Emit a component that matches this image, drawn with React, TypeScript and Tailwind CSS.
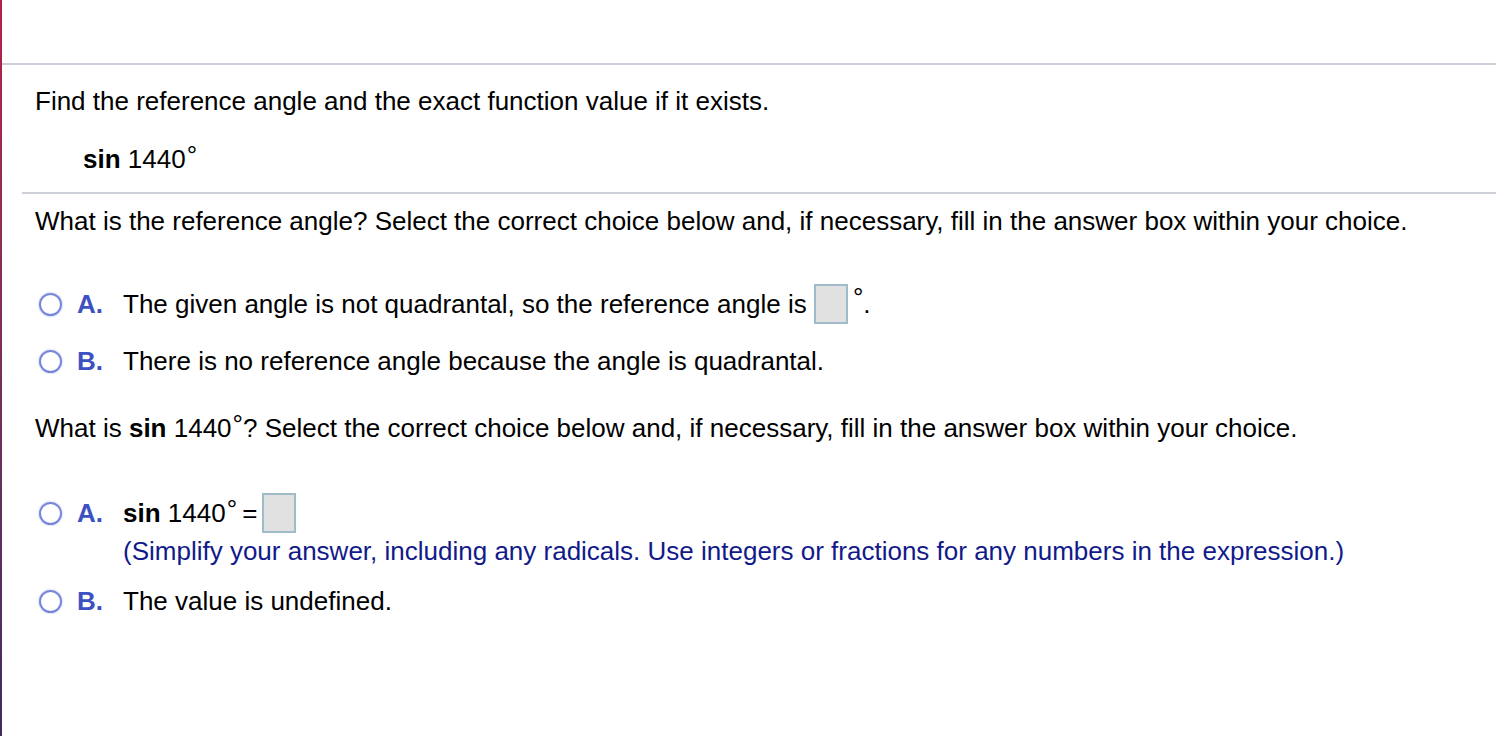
import React from "react";

const Deg = () => <span className="relative -top-[4px] ml-[1px]">°</span>;

const Radio = () => (
  <span className="inline-block w-[23px] h-[23px] rounded-full border-2 border-[#7686da] shadow-[0_0_2px_rgba(110,125,215,0.7)] shrink-0" />
);

const Box = () => (
  <span className="inline-block w-[34px] h-[40px] bg-[#e1e1e1] border-2 border-[#a0bccb] shrink-0" />
);

const Option = ({ letter, children, className = "" }: { letter: string; children: React.ReactNode; className?: string }) => (
  <div className={"flex items-center h-[42px] " + className}>
    <div className="w-[42px] flex justify-start pl-[4px]">
      <Radio />
    </div>
    <span className="w-[46px] font-bold text-[#3d51c2]">{letter}</span>
    <div className="flex items-center">{children}</div>
  </div>
);

export default function App() {
  return (
    <div
      className="flex w-[1496px] h-[736px] bg-white text-black text-[26px] leading-none overflow-hidden"
      style={{ fontFamily: '"Liberation Sans", Arial, sans-serif' }}
    >
      <div className="w-[2px] h-full bg-gradient-to-b from-[#b52049] to-[#3f2a63] shrink-0" />
      <div className="flex-1 flex flex-col">
        <div className="h-[63px] shrink-0" />
        <div className="h-[2px] bg-[#cdd0d9] shrink-0" />
        <div className="pl-[33px] mt-[23px] h-[26px]">Find the reference angle and the exact function value if it exists.</div>
        <div className="pl-[81px] mt-[32px] h-[26px]">
          <b>sin</b> 1440<Deg />
        </div>
        <div className="ml-[20px] mt-[20px] h-[2px] bg-[#cdd0d9] shrink-0" />
        <div className="pl-[33px] mt-[14px] h-[26px]">
          What is the reference angle? Select the correct choice below and, if necessary, fill in the answer box within your choice.
        </div>
        <div className="pl-[33px]">
          <Option letter="A." className="mt-[49px]">
            <span className="whitespace-pre">The given angle is not quadrantal, so the reference angle is </span>
            <Box />
            <span className="ml-[5px] h-[26px]">
              <span className="relative -top-[7px]">°</span>.
            </span>
          </Option>
          <Option letter="B." className="mt-[15px]">
            <span>There is no reference angle because the angle is quadrantal.</span>
          </Option>
        </div>
        <div className="pl-[33px] mt-[33px] h-[26px]">
          What is <b>sin</b> 1440<Deg />? Select the correct choice below and, if necessary, fill in the answer box within your choice.
        </div>
        <div className="pl-[33px]">
          <Option letter="A." className="mt-[51px]">
            <span className="whitespace-pre">
              <b>sin</b> 1440<Deg />
              <span className="ml-[-2px]"> = </span>
            </span>
            <span className="ml-[-3px] flex">
              <Box />
            </span>
          </Option>
          <div className="pl-[88px] mt-[4px] h-[26px] text-[#111a8a]">
            (Simplify your answer, including any radicals. Use integers or fractions for any numbers in the expression.)
          </div>
          <Option letter="B." className="mt-[16px]">
            <span>The value is undefined.</span>
          </Option>
        </div>
      </div>
    </div>
  );
}
